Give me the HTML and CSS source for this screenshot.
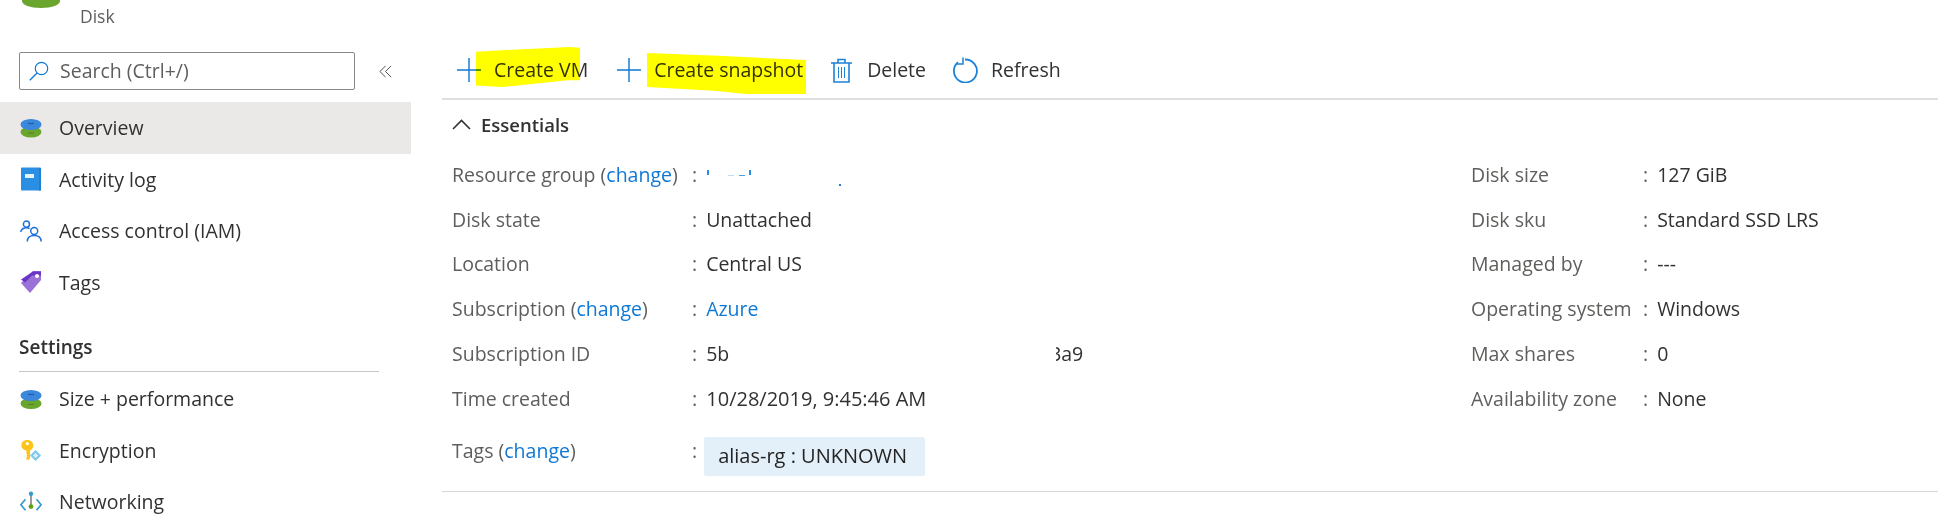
FILE: index.html
```html
<!DOCTYPE html>
<html lang="en">
<head>
<meta charset="utf-8">
<title>Disk</title>
<link rel="stylesheet" href="styles.css">
</head>
<body>
<div class="page">
  <aside class="side">
    <header class="res">
      <svg class="res-icon" viewBox="0 0 38 8"><path d="M0 0h38v1c0 4-8 7-19 7S0 5 0 1z" fill="#6aa62e"/></svg>
      <span class="res-type">Disk</span>
    </header>
    <div class="search-row">
      <div class="search">
        <svg class="ic-search" viewBox="0 0 20 20"><circle cx="12.5" cy="7.5" r="6.2" fill="none" stroke="#0f78d4" stroke-width="1.2"/><path d="M8 12 .8 19.2" stroke="#0f78d4" stroke-width="1.3"/></svg>
        <span class="search-label">Search (Ctrl+/)</span>
      </div>
      <svg class="ic-collapse" viewBox="0 0 14 14"><path d="M7 1 1 7l6 6M13 1 7 7l6 6" fill="none" stroke="#444" stroke-width="1"/></svg>
    </div>
    <nav class="nav">
      <a class="nav-item active"><svg class="ic" viewBox="0 0 22 24"><ellipse cx="11" cy="16" rx="10.500" ry="5.500" fill="#6aa62e"/><ellipse cx="11" cy="8.500" rx="10.500" ry="5.500" fill="#3a87dc"/><path d="M8 7.500h6" stroke="#1c5ea8" stroke-width="1.200"/><path d="M8 17h6" stroke="#4d8420" stroke-width="1"/></svg>Overview</a>
      <a class="nav-item"><svg class="ic" viewBox="0 0 22 24"><rect x="1" y="0.500" width="20" height="23" rx="1" fill="#2a8fe4"/><path d="M20 1v23" stroke="#1b6fb8" stroke-width="1"/><rect x="5" y="7" width="9" height="4" fill="#e8f2fb"/></svg>Activity log</a>
      <a class="nav-item"><svg class="ic ic-iam" viewBox="0 0 24 24" fill="none" stroke="#1c6fdc" stroke-width="1.600"><circle cx="7" cy="4.500" r="3.300"/><path d="M.7 13c1-3 3-4.500 6.300-4.500 1.500 0 2.500.3 3.500 1"/><circle cx="15.500" cy="12" r="3.800"/><path d="M8 23.500c0-4 3-6.500 7.500-6.500s7.500 2.500 7.500 6.500"/></svg>Access control (IAM)</a>
      <a class="nav-item"><svg class="ic" viewBox="0 0 22 24"><path d="M13 1h8v9L10 23 1 13z" fill="#9a71d6"/><path d="M13 1h8v4H12L5 12 1 9z" fill="#6b34c9" transform="translate(0 .5)"/><circle cx="17" cy="6" r="2" fill="#fff"/></svg>Tags</a>
    </nav>
    <h3 class="group">Settings</h3>
    <nav class="nav nav-settings">
      <a class="nav-item"><svg class="ic" viewBox="0 0 22 24"><ellipse cx="11" cy="16.500" rx="10.500" ry="5.500" fill="#6aa62e"/><ellipse cx="11" cy="8.500" rx="10.500" ry="5.500" fill="#3a87dc"/><path d="M8 7.500h6" stroke="#1c5ea8" stroke-width="1.200"/><path d="M8 17.500h6" stroke="#4d8420" stroke-width="1"/></svg>Size + performance</a>
      <a class="nav-item"><svg class="ic" viewBox="0 0 24 24"><path d="M8 1c4 0 6.500 2.500 6.500 6 0 2.500-1.500 4.500-3.500 5.500V21l-2 2-2-1v-2l1-1-1-1 1-1-1-1v-3.500C3 11.500 1.500 9.500 1.500 7 1.500 3.500 4 1 8 1z" fill="#fcc419"/><circle cx="8" cy="5" r="1.800" fill="#fff"/><path d="M17 12l6 6-6 6-6-6z" fill="#7cc7ea"/><path d="M17 15l3 3-3 3-3-3z" fill="#d8f0fa"/></svg>Encryption</a>
      <a class="nav-item"><svg class="ic" viewBox="0 0 24 24"><path d="M12 2v15" stroke="#555" stroke-width="1.300"/><circle cx="12" cy="3" r="2.400" fill="#3499cd"/><circle cx="12" cy="17" r="2.600" fill="#5ea215"/><path d="M6 9l-5 6 5 6M18 9l5 6-5 6" fill="none" stroke="#3499cd" stroke-width="1.800"/></svg>Networking</a>
    </nav>
  </aside>
  <main class="main">
    <div class="toolbar">
      <button class="tool tool-vm"><svg class="ic-plus" viewBox="0 0 24 24"><path d="M12 0v24M0 12h24" stroke="#0f78d4" stroke-width="1.400"/></svg>Create VM</button>
      <button class="tool tool-snap"><svg class="ic-plus" viewBox="0 0 24 24"><path d="M12 0v24M0 12h24" stroke="#0f78d4" stroke-width="1.400"/></svg>Create snapshot</button>
      <button class="tool tool-del"><svg class="ic-trash" viewBox="0 0 21 25" fill="none" stroke="#1e82d6" stroke-width="1.600"><path d="M0 5h21M7 5V1.500h7V5M3 5v19h15V5"/><path d="M7.500 9v11M10.500 9v11M13.500 9v11" stroke-width="1"/></svg>Delete</button>
      <button class="tool tool-ref"><svg class="ic-refresh" viewBox="0 0 26 26" fill="none" stroke="#1e82d6" stroke-width="1.800"><path d="M12 2.500A11.500 11.500 0 1 1 5 5.200"/><path d="M10 .5v6.500H3.800" stroke-width="1.500"/></svg>Refresh</button>
    </div>
    <div class="ess-head">
      <svg class="ic-chev" viewBox="0 0 19 11"><path d="M1 10 9.500 1.500 18 10" fill="none" stroke="#333" stroke-width="1.600"/></svg>
      <span>Essentials</span>
    </div>
    <section class="ess">
      <dl class="col col-left">
        <div class="row"><dt>Resource group (<a>change</a>)</dt><dd><svg class="scrap" viewBox="0 0 136 18"><path d="M1 1h2v5H1zM43 1h2v5h-2z" fill="#2a8fe4"/><path d="M22 6h6v1h-6z" fill="#bcdcf4"/><path d="M33 6h6v1h-6z" fill="#4a9fe4"/><path d="M133 15h2v2h-2z" fill="#2a7fd4"/></svg></dd></div>
        <div class="row"><dt>Disk state</dt><dd>Unattached</dd></div>
        <div class="row"><dt>Location</dt><dd>Central US</dd></div>
        <div class="row"><dt>Subscription (<a>change</a>)</dt><dd><a>Azure</a></dd></div>
        <div class="row"><dt>Subscription ID</dt><dd class="subid"><span class="sub-head">5b</span><span class="tail">3a9</span></dd></div>
        <div class="row"><dt>Time created</dt><dd class="wide">10/28/2019, 9:45:46 AM</dd></div>
        <div class="row row-tags"><dt>Tags (<a>change</a>)</dt><dd><span class="tag">alias-rg : UNKNOWN</span></dd></div>
      </dl>
      <dl class="col col-right">
        <div class="row"><dt>Disk size</dt><dd>127 GiB</dd></div>
        <div class="row"><dt>Disk sku</dt><dd>Standard SSD LRS</dd></div>
        <div class="row"><dt>Managed by</dt><dd>---</dd></div>
        <div class="row"><dt>Operating system</dt><dd>Windows</dd></div>
        <div class="row"><dt>Max shares</dt><dd>0</dd></div>
        <div class="row"><dt>Availability zone</dt><dd>None</dd></div>
      </dl>
    </section>
  </main>
</div>
<div class="mark mark-vm"></div>
<div class="mark mark-snap"></div>
</body>
</html>
```
FILE: styles.css
```css
* { box-sizing: border-box; }
html, body { margin: 0; height: 514px; overflow: hidden; background: #fff; }
body { position: relative; font-family: "Open Sans", "Noto Sans", sans-serif; font-size: 19.500px; color: #323130; }
.page { display: flex; height: 514px; }
.side { width: 411px; flex: none; margin-right: 31px; }
.res { height: 52px; position: relative; padding: 2px 0 0 80px; }
.res-icon { position: absolute; left: 22px; top: 0; width: 38px; height: 8px; }
.res-type { font-size: 17.500px; color: #605e5c; line-height: 26px; }
.search-row { display: flex; align-items: center; padding-left: 19px; height: 38px; margin-bottom: 12px; }
.search { width: 336px; height: 38px; border: 1px solid #8a8886; border-radius: 2px; display: flex; align-items: center; padding-left: 9px; gap: 11px; color: #605e5c; }
.search-label { margin-top: -2px; }
.ic-search { width: 20px; height: 20px; flex: none; }
.ic-collapse { width: 13px; height: 13px; margin-left: 24px; }
.nav { display: flex; flex-direction: column; }
.nav-settings { margin-top: 1px; }
.nav-item { height: 51.500px; display: flex; align-items: center; gap: 17px; padding-left: 20px; color: #323130; }
.nav-item.active { background: #ebe9e7; }
.ic { width: 22px; height: 24px; flex: none; }
.group { margin: 27px 32px 0 19px; height: 37px; font-size: 19px; font-weight: 600; line-height: 24px; border-bottom: 1px solid #c8c6c4; color: #323130; }
.main { flex: 1; min-width: 0; }
.toolbar { height: 100px; padding: 46px 0 0 15px; display: flex; align-items: flex-start; border-bottom: 2px solid #e1dfdd; }
.tool { display: flex; align-items: center; height: 46px; background: none; border: 0; padding: 0; font: inherit; color: #323130; gap: 13px; margin-right: 27px; }
.ic-plus { width: 24px; height: 24px; flex: none; margin-top: 2px; }
.tool-vm { margin-right: 29px; }
.tool-snap { margin-right: 28px; }
.ic-trash { width: 21px; height: 25px; margin-top: 2px; }
.ic-refresh { width: 26px; height: 26px; margin-top: 2px; }
.tool-del { gap: 15px; }
.tool-ref { gap: 12px; }
.ess-head { height: 48px; display: flex; align-items: center; padding-left: 10px; gap: 10px; font-weight: 600; font-size: 18.500px; }
.ic-chev { width: 19px; height: 11px; }
.ess { display: flex; border-bottom: 1px solid #d8d6d4; height: 344px; padding-left: 10px; padding-top: 4px; }
.col { margin: 0; }
.col-left { width: 1019px; }
.row { display: flex; height: 44.800px; align-items: center; }
dt { color: #605e5c; flex: none; white-space: nowrap; }
dd { margin: 0; color: #323130; white-space: nowrap; }
dd::before { content: ":"; color: #605e5c; margin-right: 9px; }
.col-left dt { width: 240px; }
.col-right dt { width: 172px; }
a { color: #0f78d4; }
.wide { font-size: 20px; }
.row-tags { height: 58px; align-items: flex-start; padding-top: 16px; }
.row-tags dd { display: flex; align-items: flex-start; }
.tag { display: block; width: 221px; background: #e3f0fa; border-radius: 2px; height: 39px; line-height: 38px; padding-left: 14px; font-size: 20px; margin-left: -2px; color: #252423; }
.scrap { width: 136px; height: 18px; vertical-align: -5px; }
.subid { display: flex; }
.sub-head { width: 344px; }
.tail { clip-path: inset(0 0 0 6px); }
.mark { position: absolute; background: #ffff00; mix-blend-mode: multiply; }
.mark-vm { left: 476px; top: 47px; width: 104px; height: 40px; clip-path: polygon(0 12%, 40% 6%, 90% 0, 100% 2%, 100% 83%, 88% 83%, 25% 100%, 0 96%); }
.mark-snap { left: 647px; top: 53px; width: 159px; height: 41px; clip-path: polygon(0 0, 45% 7%, 100% 17%, 100% 100%, 62% 100%, 42% 92%, 0 83%); }
```
